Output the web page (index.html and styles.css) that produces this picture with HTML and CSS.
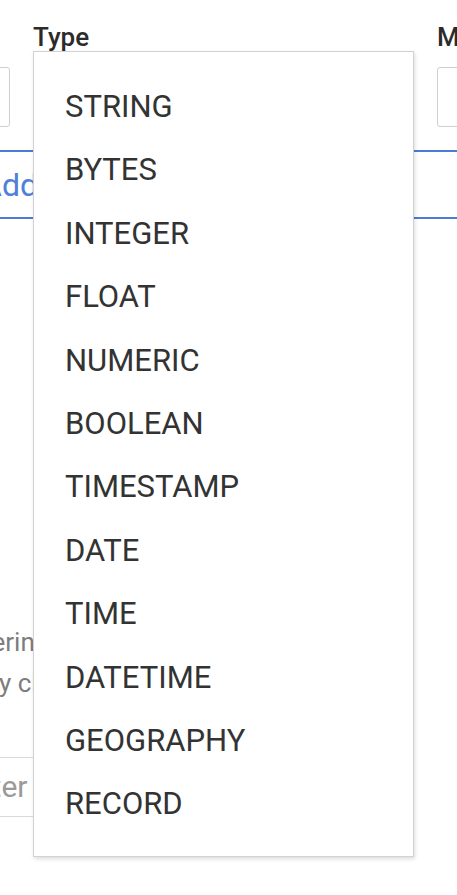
FILE: index.html
```html
<!DOCTYPE html>
<html lang="en">
<head>
<meta charset="utf-8">
<title>Schema field type</title>
<link rel="stylesheet" href="styles.css">
</head>
<body>
<div class="page">
  <div class="fields">
    <div class="field field-name">
      <div class="label">Name</div>
      <div class="box"></div>
    </div>
    <div class="field field-type">
      <div class="label">Type</div>
      <div class="box"></div>
    </div>
    <div class="field field-mode">
      <div class="label">Mode</div>
      <div class="box"></div>
    </div>
  </div>

  <div class="add-bar"><span class="add-text">Add field</span></div>

  <div class="desc">
    <div class="desc-line line-one">ering order determines the sort order of the data.</div>
    <div class="desc-line line-two">y clustering columns</div>
  </div>

  <div class="text-input"><span class="placeholder">Enter clustering fields</span></div>

  <ul class="menu">
    <li class="menu-item">STRING</li>
    <li class="menu-item">BYTES</li>
    <li class="menu-item">INTEGER</li>
    <li class="menu-item">FLOAT</li>
    <li class="menu-item">NUMERIC</li>
    <li class="menu-item">BOOLEAN</li>
    <li class="menu-item">TIMESTAMP</li>
    <li class="menu-item">DATE</li>
    <li class="menu-item">TIME</li>
    <li class="menu-item">DATETIME</li>
    <li class="menu-item">GEOGRAPHY</li>
    <li class="menu-item">RECORD</li>
  </ul>
</div>
</body>
</html>
```

FILE: styles.css
```css
html, body {
  margin: 0;
  padding: 0;
  overflow: hidden;
  background: #ffffff;
}

body {
  font-family: Roboto, "Liberation Sans", Arial, sans-serif;
  color: #333333;
}

.page {
  position: relative;
  width: 457px;
  height: 895px;
  overflow: hidden;
}

/* Top row of form fields */
.fields {
  display: flex;
  gap: 23px;
  margin-left: -190px;
  padding-top: 22px;
}

.field {
  display: flex;
  flex-direction: column;
  flex: none;
}

.field-name { width: 200px; }
.field-type { width: 381px; }
.field-mode { width: 200px; }

.label {
  font-size: 26px;
  font-weight: 500;
  line-height: 30px;
  height: 30px;
  color: #2b2b2b;
  white-space: nowrap;
  margin-bottom: 15px;
}

.field-name .label { visibility: hidden; }

.box {
  box-sizing: border-box;
  height: 60px;
  border: 1px solid #cfcfcf;
  border-radius: 3px;
  background: #ffffff;
}

/* Blue "Add field" bar */
.add-bar {
  box-sizing: border-box;
  margin-top: 23px;
  height: 69px;
  border-top: 2px solid #4b7bd6;
  border-bottom: 2px solid #4b7bd6;
  display: flex;
  align-items: center;
}

.add-text {
  font-size: 32px;
  line-height: 32px;
  color: #4f80da;
  margin-left: -19px;
  white-space: nowrap;
}

/* Description text */
.desc {
  margin-top: 403px;
  width: 400px;
  overflow: hidden;
  font-size: 26px;
  line-height: 41px;
  color: #7d7d7d;
  white-space: nowrap;
}

.line-one { margin-left: -8.5px; }
.line-two { margin-left: -1px; }

/* Lower input */
.text-input {
  box-sizing: border-box;
  margin-top: 53px;
  margin-left: -60px;
  width: 460px;
  height: 60px;
  border: 1px solid #dadada;
  border-radius: 3px;
  display: flex;
  align-items: center;
  overflow: hidden;
}

.placeholder {
  font-size: 30px;
  line-height: 30px;
  color: #9a9a9a;
  white-space: nowrap;
  margin-left: 17px;
}

/* Dropdown menu overlay */
.menu {
  position: absolute;
  left: 33px;
  top: 51px;
  box-sizing: border-box;
  width: 381px;
  height: 806px;
  margin: 0;
  padding: 23px 0 21px 0;
  list-style: none;
  background: #ffffff;
  border: 1px solid #d2d2d2;
  box-shadow: 1px 2px 4px rgba(0, 0, 0, 0.14);
}

.menu-item {
  height: 63.4px;
  line-height: 63.4px;
  padding-left: 31px;
  font-size: 31px;
  color: #333333;
  white-space: nowrap;
}
```
